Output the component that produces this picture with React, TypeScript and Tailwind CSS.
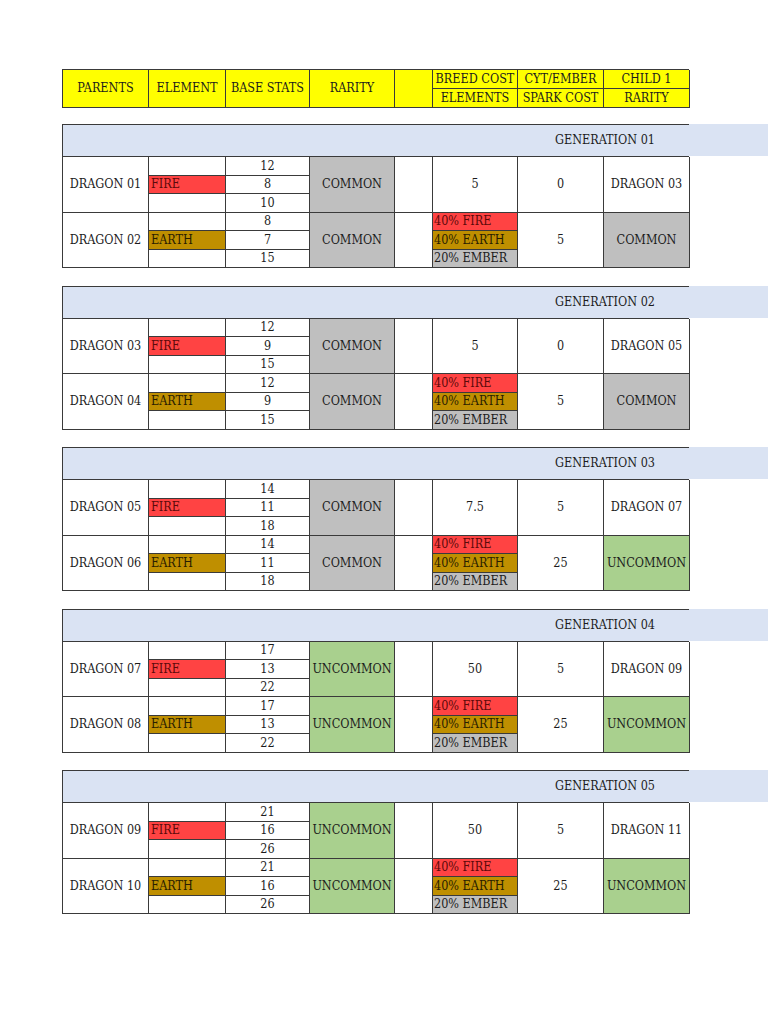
import type { ReactNode } from "react";

// Dragon breeding sheet, spreadsheet-style grid.
type Parent = { name: string; stats: number[]; rarity: string };
type Gen = {
  n: string;
  a: Parent;
  b: Parent;
  cost: string;
  cyt: string;
  child: string;
  spark: string;
  childRarity: string;
};

const gens: Gen[] = [
  { n: "01", a: { name: "DRAGON 01", stats: [12, 8, 10], rarity: "COMMON" }, b: { name: "DRAGON 02", stats: [8, 7, 15], rarity: "COMMON" }, cost: "5", cyt: "0", child: "DRAGON 03", spark: "5", childRarity: "COMMON" },
  { n: "02", a: { name: "DRAGON 03", stats: [12, 9, 15], rarity: "COMMON" }, b: { name: "DRAGON 04", stats: [12, 9, 15], rarity: "COMMON" }, cost: "5", cyt: "0", child: "DRAGON 05", spark: "5", childRarity: "COMMON" },
  { n: "03", a: { name: "DRAGON 05", stats: [14, 11, 18], rarity: "COMMON" }, b: { name: "DRAGON 06", stats: [14, 11, 18], rarity: "COMMON" }, cost: "7.5", cyt: "5", child: "DRAGON 07", spark: "25", childRarity: "UNCOMMON" },
  { n: "04", a: { name: "DRAGON 07", stats: [17, 13, 22], rarity: "UNCOMMON" }, b: { name: "DRAGON 08", stats: [17, 13, 22], rarity: "UNCOMMON" }, cost: "50", cyt: "5", child: "DRAGON 09", spark: "25", childRarity: "UNCOMMON" },
  { n: "05", a: { name: "DRAGON 09", stats: [21, 16, 26], rarity: "UNCOMMON" }, b: { name: "DRAGON 10", stats: [21, 16, 26], rarity: "UNCOMMON" }, cost: "50", cyt: "5", child: "DRAGON 11", spark: "25", childRarity: "UNCOMMON" },
];

const COLS = "grid grid-cols-[86px_77px_84px_85px_38px_85px_86px_86px] w-[627px] border-l border-t border-[#3a3a3a]";

function C({ className = "", children }: { className?: string; children?: ReactNode }) {
  return (
    <div className={`flex items-center justify-center border-r border-b border-[#3a3a3a] leading-none ${className}`}>
      {children}
    </div>
  );
}

function rarityBg(r: string) {
  return r === "COMMON" ? "bg-[#bfbfbf]" : "bg-[#a9d08e]";
}

function Block({ g }: { g: Gen }) {
  return (
    <div>
      <div className="flex h-[32px] w-[706px] bg-[#dae3f3]">
        <div className="flex w-[627px] items-center justify-end border-l border-t border-[#3a3a3a]">
          <div className="w-[168px] text-center">GENERATION {g.n}</div>
        </div>
      </div>
      <div className={`${COLS} grid-rows-[repeat(6,18.5px)]`}>
        <C className="col-start-1 row-start-1 row-span-3">{g.a.name}</C>
        <C className="col-start-2 row-start-1" />
        <C className="col-start-2 row-start-2 justify-start bg-[#ff4343] pl-[2px] text-[#5c0a0a]">FIRE</C>
        <C className="col-start-2 row-start-3" />
        {g.a.stats.map((s, i) => (
          <C key={i} className={`col-start-3 ${["row-start-1", "row-start-2", "row-start-3"][i]}`}>{s}</C>
        ))}
        <C className={`col-start-4 row-start-1 row-span-3 ${rarityBg(g.a.rarity)}`}>{g.a.rarity}</C>
        <C className="col-start-5 row-start-1 row-span-3" />
        <C className="col-start-6 row-start-1 row-span-3">{g.cost}</C>
        <C className="col-start-7 row-start-1 row-span-3">{g.cyt}</C>
        <C className="col-start-8 row-start-1 row-span-3">{g.child}</C>

        <C className="col-start-1 row-start-4 row-span-3">{g.b.name}</C>
        <C className="col-start-2 row-start-4" />
        <C className="col-start-2 row-start-5 justify-start bg-[#bf8f00] pl-[2px] text-[#2a1e00]">EARTH</C>
        <C className="col-start-2 row-start-6" />
        {g.b.stats.map((s, i) => (
          <C key={i} className={`col-start-3 ${["row-start-4", "row-start-5", "row-start-6"][i]}`}>{s}</C>
        ))}
        <C className={`col-start-4 row-start-4 row-span-3 ${rarityBg(g.b.rarity)}`}>{g.b.rarity}</C>
        <C className="col-start-5 row-start-4 row-span-3" />
        <C className="col-start-6 row-start-4 justify-start bg-[#ff4343] pl-[1px] text-[#5c0a0a]">40% FIRE</C>
        <C className="col-start-6 row-start-5 justify-start bg-[#bf8f00] pl-[1px] text-[#2a1e00]">40% EARTH</C>
        <C className="col-start-6 row-start-6 justify-start bg-[#bfbfbf] pl-[1px]">20% EMBER</C>
        <C className="col-start-7 row-start-4 row-span-3">{g.spark}</C>
        <C className={`col-start-8 row-start-4 row-span-3 ${rarityBg(g.childRarity)}`}>{g.childRarity}</C>
      </div>
    </div>
  );
}

export default function App() {
  return (
    <div className="min-h-[1024px] bg-white pl-[62px] pt-[69px] font-['DejaVu_Serif_Condensed','DejaVu_Serif',serif] text-[12.5px] text-[#1c1c1c]">
      <div className={`${COLS} grid-rows-[19px_19px] bg-[#ffff00]`}>
        <C className="col-start-1 row-start-1 row-span-2">PARENTS</C>
        <C className="col-start-2 row-start-1 row-span-2">ELEMENT</C>
        <C className="col-start-3 row-start-1 row-span-2">BASE STATS</C>
        <C className="col-start-4 row-start-1 row-span-2">RARITY</C>
        <C className="col-start-5 row-start-1 row-span-2" />
        <C className="col-start-6 row-start-1">BREED COST</C>
        <C className="col-start-7 row-start-1">CYT/EMBER</C>
        <C className="col-start-8 row-start-1">CHILD 1</C>
        <C className="col-start-6 row-start-2">ELEMENTS</C>
        <C className="col-start-7 row-start-2">SPARK COST</C>
        <C className="col-start-8 row-start-2">RARITY</C>
      </div>
      <div className="mt-[16px] flex flex-col gap-[17.5px]">
        {gens.map((g) => (
          <Block key={g.n} g={g} />
        ))}
      </div>
    </div>
  );
}
